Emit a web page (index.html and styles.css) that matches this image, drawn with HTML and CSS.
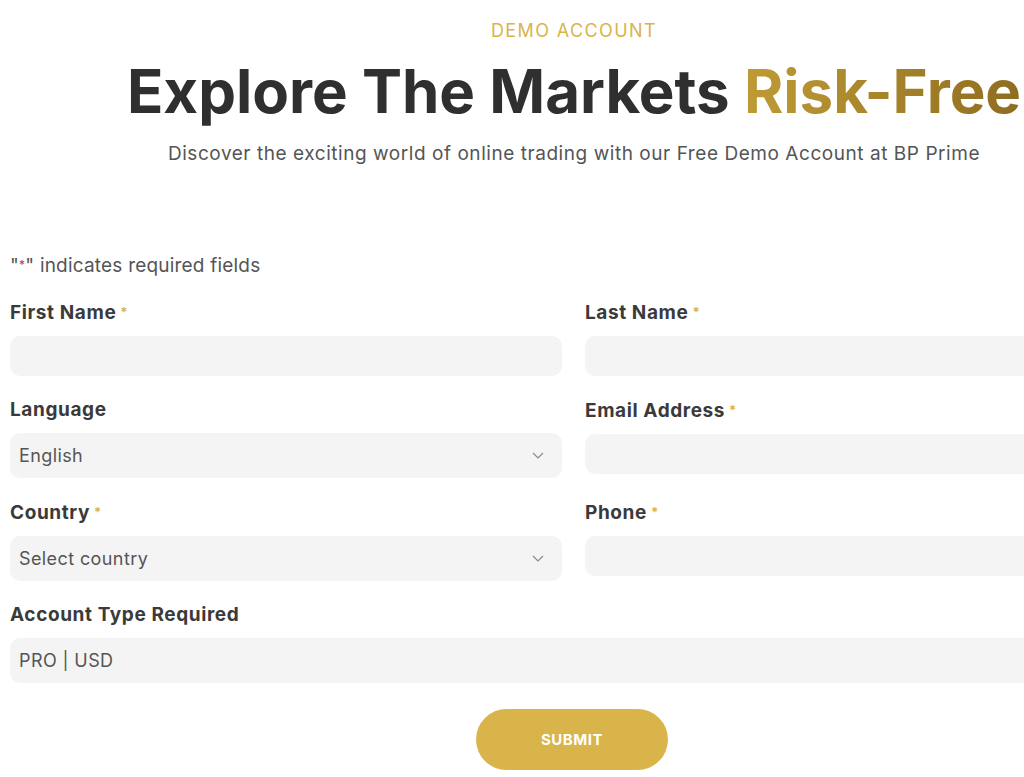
FILE: index.html
```html
<!DOCTYPE html>
<html lang="en">
  <head>
    <meta charset="UTF-8" />
    <meta name="viewport" content="width=device-width, initial-scale=1.0" />
    <title>Demo Account - BP Prime</title>
    <link rel="stylesheet" href="styles.css">
  </head>
  <body>
    <div class="page">
      <div class="intro">
        <p class="eyebrow">DEMO ACCOUNT</p>
        <h1 class="headline">Explore The Markets <span class="gold">Risk-Free</span></h1>
        <p class="lead">Discover the exciting world of online trading with our Free Demo Account at BP Prime</p>
      </div>

      <form class="demoForm">
        <p class="requiredNote">"<span class="star">*</span>" indicates required fields</p>
        <div class="fields">
          <div class="field">
            <label for="firstName">First Name<span class="req">*</span></label>
            <input type="text" id="firstName" />
          </div>
          <div class="field">
            <label for="lastName">Last Name<span class="req">*</span></label>
            <input type="text" id="lastName" />
          </div>
          <div class="field">
            <label for="language">Language</label>
            <div class="selectWrap">
              <select id="language">
                <option>English</option>
              </select>
              <svg class="chevron" width="12" height="7" viewBox="0 0 12 7"><path d="M1 1l5 5 5-5" fill="none" stroke="#8a8a8a" stroke-width="1.2"/></svg>
            </div>
          </div>
          <div class="field">
            <label for="email">Email Address<span class="req">*</span></label>
            <input type="email" id="email" />
          </div>
          <div class="field">
            <label for="country">Country<span class="req">*</span></label>
            <div class="selectWrap">
              <select id="country">
                <option>Select country</option>
              </select>
              <svg class="chevron" width="12" height="7" viewBox="0 0 12 7"><path d="M1 1l5 5 5-5" fill="none" stroke="#8a8a8a" stroke-width="1.2"/></svg>
            </div>
          </div>
          <div class="field">
            <label for="phone">Phone<span class="req">*</span></label>
            <input type="tel" id="phone" />
          </div>
          <div class="field wide">
            <label for="accountType">Account Type Required</label>
            <div class="selectWrap">
              <select id="accountType">
                <option>PRO | USD</option>
              </select>
            </div>
          </div>
        </div>
        <div class="actions">
          <button type="submit" class="submitButton">SUBMIT</button>
        </div>
      </form>
    </div>
  </body>
</html>
```

FILE: styles.css
```css
body {
  margin: 0;
  overflow-x: hidden;
  background: #fff;
  font-family: Inter, "Open Sans", sans-serif;
  color: #333;
}
.page {
  width: 1128px;
  margin-left: 10px;
}
.intro {
  text-align: center;
}
.eyebrow {
  margin: 21px 0 0;
  font-size: 18px;
  line-height: 20px;
  letter-spacing: 1.4px;
  color: #d9b44a;
}
.headline {
  margin: 15px 0 0;
  font-size: 60px;
  line-height: 70px;
  font-weight: 700;
  color: #2f2f2f;
}
.gold {
  background: linear-gradient(90deg, #bf9b36, #8f6d20);
  -webkit-background-clip: text;
  background-clip: text;
  color: transparent;
}
.lead {
  margin: 16px 0 0;
  font-size: 19px;
  line-height: 24px;
  letter-spacing: 0.55px;
  color: #555;
}
.demoForm {
  margin-top: 87px;
}
.requiredNote {
  margin: 0 0 22px;
  font-size: 19px;
  line-height: 24px;
  letter-spacing: 0.2px;
  color: #555;
}
.star {
  color: #c0392b;
  font-size: 12px;
  vertical-align: 3px;
}
.fields {
  display: grid;
  grid-template-columns: 552px 553px;
  column-gap: 23px;
  row-gap: 22px;
}
.field {
  display: flex;
  flex-direction: column;
}
.field.wide {
  grid-column: 1 / -1;
}
.field label {
  font-size: 19px;
  line-height: 24px;
  font-weight: 700;
  letter-spacing: 0.6px;
  color: #3a3a3a;
  margin-bottom: 11px;
}
.req {
  color: #d9b44a;
  font-size: 13px;
  margin-left: 4px;
  vertical-align: 2px;
}
.field input,
.field select {
  box-sizing: border-box;
  width: 100%;
  border: none;
  border-radius: 10px;
  background: #f4f4f4;
  font-family: inherit;
  font-size: 18px;
  letter-spacing: 0.4px;
  color: #555;
  padding: 0 9px;
  outline: none;
}
.field input {
  height: 40px;
}
.field select {
  height: 45px;
  appearance: none;
  -webkit-appearance: none;
}
.selectWrap {
  position: relative;
}
.chevron {
  position: absolute;
  right: 18px;
  top: 19px;
}
.actions {
  display: flex;
  justify-content: center;
  margin-top: 26px;
  padding-right: 4px;
}
.submitButton {
  width: 192px;
  height: 61px;
  border: none;
  border-radius: 31px;
  background: #d9b44a;
  color: #fff;
  font-family: inherit;
  font-size: 15px;
  font-weight: 700;
  letter-spacing: 0.5px;
  cursor: pointer;
}
```
